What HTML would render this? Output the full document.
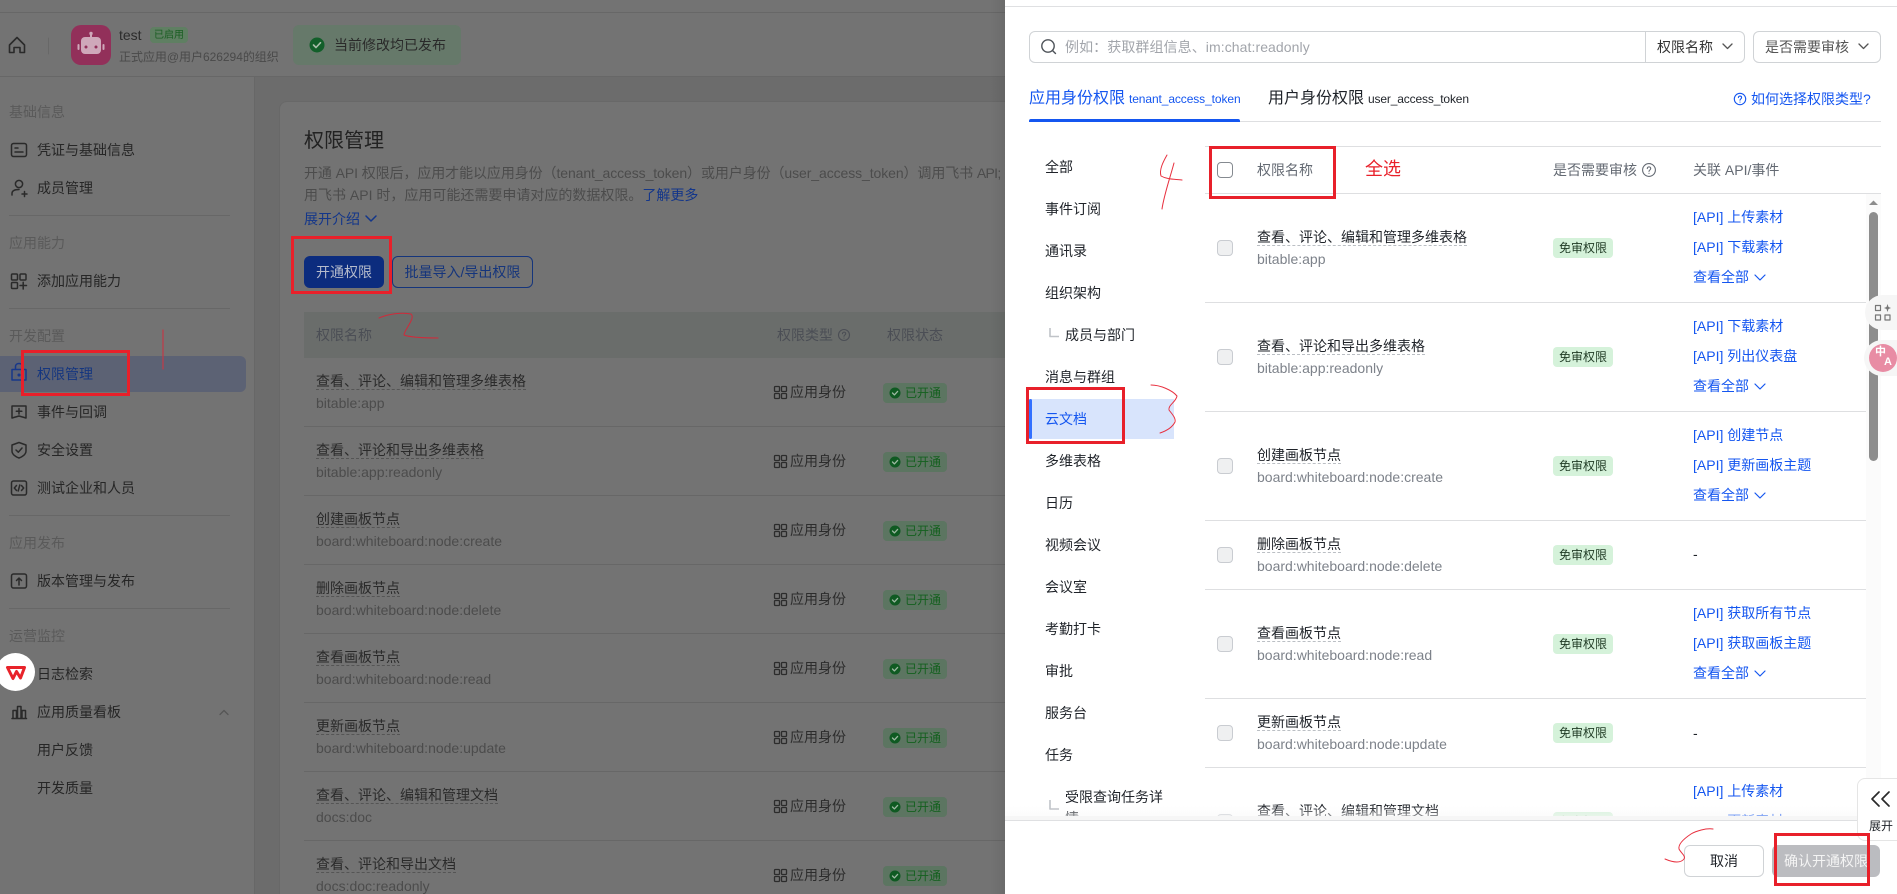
<!DOCTYPE html>
<html lang="zh-CN"><head><meta charset="utf-8"><title>权限管理</title>
<style>
html,body{margin:0;padding:0;width:1897px;height:894px;overflow:hidden;background:#737373}
body{position:relative;font-family:"Liberation Sans","Noto Sans CJK SC",sans-serif;font-size:14px;color:#262626}
.a,.b,.l,.ti,.su,.ty,.st,.c,.rt,.rs,.ap,.tg,.vm{position:absolute;white-space:nowrap;line-height:20px}
.b{background:#000;line-height:0}
.l{left:9px;color:#5a5a5a}
.b{position:absolute}
.ti{left:316px;line-height:16px;height:16px;border-bottom:1px dashed #555;color:#2a2a2a}
.su{left:316px;color:#4c4c4c}
.ty{left:790px;color:#2c2c2c}
.st{left:883px;width:64px;height:20px;background:#5c7561;border-radius:4px;color:#14601f;font-size:12px;text-indent:22px}
.c{left:1045px;color:#1f2329}
.rt{left:1257px;line-height:16px;height:16px;border-bottom:1px dashed #bbbfc4;color:#1f2329}
.rs{left:1257px;color:#7d828a}
.ap{left:1693px;color:#1456f0}
.tg{left:1553px;width:60px;height:20px;background:#d5f2da;border-radius:4px;color:#1f3a24;font-size:12px;text-align:center}
.ck{position:absolute;left:1217px;width:14px;height:14px;background:#eff0f1;border:1px solid #c9ccd1;border-radius:4px}
.ln{position:absolute;height:1px}
.rb{position:absolute;border:3px solid #e8202a;box-sizing:border-box}
svg{position:absolute;left:0;top:0;overflow:visible}
</style></head><body>

<!-- dimmed page background -->
<div class="ln" style="left:0;top:12px;width:1005px;background:#676767"></div>
<div class="ln" style="left:0;top:76px;width:1005px;background:#676767"></div>
<div class="ln" style="left:254px;top:77px;height:817px;width:1px;background:#676767"></div>
<div style="position:absolute;left:255px;top:77px;width:750px;height:817px;background:#6c6c6c"></div>
<div style="position:absolute;left:279px;top:101px;width:740px;height:810px;background:#737373;border:1px solid #686868;border-radius:8px;box-sizing:border-box"></div>

<!-- header -->
<div style="position:absolute;left:71px;top:25px;width:40px;height:40px;border-radius:10px;background:#92305a"></div>
<div style="position:absolute;left:150px;top:27px;width:38px;height:16px;border-radius:4px;background:#5f7f62"></div>
<div class="a" style="left:119px;top:25px;color:#2c2c2c;font-size:14px">test</div>
<div class="a" style="left:154px;top:26px;color:#1a5e22;font-size:10px">已启用</div>
<div class="a" style="left:119px;top:47px;color:#4a4a4a;font-size:12px;letter-spacing:-.03px">正式应用@用户626294的组织</div>
<div style="position:absolute;left:293px;top:25px;width:168px;height:40px;border-radius:6px;background:#66796a"></div>
<div class="a" style="left:334px;top:35px;color:#2a2a2a">当前修改均已发布</div>

<!-- sidebar -->
<div class="ln" style="left:9px;top:215px;width:221px;background:#676767"></div>
<div class="ln" style="left:9px;top:308px;width:221px;background:#676767"></div>
<div class="ln" style="left:9px;top:515px;width:221px;background:#676767"></div>
<div class="ln" style="left:9px;top:608px;width:221px;background:#676767"></div>
<div style="position:absolute;left:0;top:356px;width:246px;height:36px;background:#5c6274;border-radius:0 6px 6px 0"></div>
<div class="l" style="top:102px">基础信息</div>
<div class="a" style="left:37px;top:140px">凭证与基础信息</div>
<div class="a" style="left:37px;top:178px">成员管理</div>
<div class="l" style="top:233px">应用能力</div>
<div class="a" style="left:37px;top:271px">添加应用能力</div>
<div class="l" style="top:326px">开发配置</div>
<div class="a" style="left:37px;top:364px;color:#15367f">权限管理</div>
<div class="a" style="left:37px;top:402px">事件与回调</div>
<div class="a" style="left:37px;top:440px">安全设置</div>
<div class="a" style="left:37px;top:478px">测试企业和人员</div>
<div class="l" style="top:533px">应用发布</div>
<div class="a" style="left:37px;top:571px">版本管理与发布</div>
<div class="l" style="top:626px">运营监控</div>
<div class="a" style="left:37px;top:664px">日志检索</div>
<div class="a" style="left:37px;top:702px">应用质量看板</div>
<div class="a" style="left:37px;top:740px">用户反馈</div>
<div class="a" style="left:37px;top:778px">开发质量</div>

<!-- main card -->
<div class="a" style="left:304px;top:131px;font-size:20px;color:#222">权限管理</div>
<div class="a" style="left:304px;top:163px;color:#4c4c4c;letter-spacing:-.09px">开通 API 权限后，应用才能以应用身份（tenant_access_token）或用户身份（user_access_token）调用飞书 <span style="letter-spacing:-.7px">API;</span></div>
<div class="a" style="left:304px;top:185px;color:#4c4c4c">用飞书 API 时，应用可能还需要申请对应的数据权限。<span style="color:#13368a">了解更多</span></div>
<div class="a" style="left:304px;top:209px;color:#13368a">展开介绍</div>
<div style="position:absolute;left:304px;top:256px;width:80px;height:32px;background:#0c2c7e;border-radius:6px;color:#b5bbcc;line-height:32px;text-align:center">开通权限</div>
<div style="position:absolute;left:392px;top:256px;width:141px;height:32px;box-sizing:border-box;border:1px solid #15357c;border-radius:6px;color:#15357c;line-height:30px;text-align:center">批量导入/导出权限</div>

<div style="position:absolute;left:304px;top:312px;width:701px;height:46px;background:#6a6d6b"></div>
<div class="a" style="left:316px;top:325px;color:#4b4e55">权限名称</div>
<div class="a" style="left:777px;top:325px;color:#4b4e55">权限类型</div>
<div class="a" style="left:887px;top:325px;color:#4b4e55">权限状态</div>

<div class="ln" style="left:304px;top:426px;width:701px;background:#676767"></div>
<div class="ln" style="left:304px;top:495px;width:701px;background:#676767"></div>
<div class="ln" style="left:304px;top:564px;width:701px;background:#676767"></div>
<div class="ln" style="left:304px;top:633px;width:701px;background:#676767"></div>
<div class="ln" style="left:304px;top:702px;width:701px;background:#676767"></div>
<div class="ln" style="left:304px;top:771px;width:701px;background:#676767"></div>
<div class="ln" style="left:304px;top:840px;width:701px;background:#676767"></div>

<div class="ti" style="top:373px">查看、评论、编辑和管理多维表格</div><div class="su" style="top:393px">bitable:app</div>
<div class="ti" style="top:442px">查看、评论和导出多维表格</div><div class="su" style="top:462px">bitable:app:readonly</div>
<div class="ti" style="top:511px">创建画板节点</div><div class="su" style="top:531px">board:whiteboard:node:create</div>
<div class="ti" style="top:580px">删除画板节点</div><div class="su" style="top:600px">board:whiteboard:node:delete</div>
<div class="ti" style="top:649px">查看画板节点</div><div class="su" style="top:669px">board:whiteboard:node:read</div>
<div class="ti" style="top:718px">更新画板节点</div><div class="su" style="top:738px">board:whiteboard:node:update</div>
<div class="ti" style="top:787px">查看、评论、编辑和管理文档</div><div class="su" style="top:807px">docs:doc</div>
<div class="ti" style="top:856px">查看、评论和导出文档</div><div class="su" style="top:876px">docs:doc:readonly</div>

<div class="ty" style="top:382px">应用身份</div><div class="st" style="top:383px">已开通</div>
<div class="ty" style="top:451px">应用身份</div><div class="st" style="top:452px">已开通</div>
<div class="ty" style="top:520px">应用身份</div><div class="st" style="top:521px">已开通</div>
<div class="ty" style="top:589px">应用身份</div><div class="st" style="top:590px">已开通</div>
<div class="ty" style="top:658px">应用身份</div><div class="st" style="top:659px">已开通</div>
<div class="ty" style="top:727px">应用身份</div><div class="st" style="top:728px">已开通</div>
<div class="ty" style="top:796px">应用身份</div><div class="st" style="top:797px">已开通</div>
<div class="ty" style="top:865px">应用身份</div><div class="st" style="top:866px">已开通</div>

<div style="position:absolute;left:990px;top:0;width:15px;height:894px;background:linear-gradient(90deg,rgba(0,0,0,0),rgba(0,0,0,.07))"></div>

<!-- left-side icons -->
<svg width="1005" height="894" fill="none" stroke="#2a2a2a" stroke-width="1.5" stroke-linecap="round" stroke-linejoin="round">
<defs>
<g id="idn"><rect x="0" y="0" width="5" height="5" rx="1"/><rect x="7" y="0" width="5" height="5" rx="1"/><rect x="0" y="7" width="5" height="5" rx="1"/><rect x="7" y="7" width="5" height="5" rx="1"/></g>
<g id="ok"><circle cx="0" cy="0" r="5.5" fill="#0f5a22" stroke="none"/><path d="M-2.5 0 L-.6 1.9 L2.6 -1.6" stroke="#9db8a2" stroke-width="1.3"/></g>
</defs>
<path d="M9.5 45 L17 37.5 L24.5 45 V52.5 H20 V47.5 H14 V52.5 H9.5 Z" stroke-width="1.6"/>
<path d="M48.5 38 V54" stroke="#686868" stroke-width="1"/>
<!-- robot -->
<path d="M91 33 V37" stroke="#cfa8ba" stroke-width="2"/><circle cx="91" cy="33.5" r="1.7" fill="#cfa8ba" stroke="none"/>
<rect x="81" y="37" width="20" height="17" rx="4" fill="#cfa8ba" stroke="none"/>
<circle cx="86" cy="47" r="1.5" fill="#92305a" stroke="none"/><circle cx="96" cy="47" r="1.5" fill="#92305a" stroke="none"/>
<rect x="77.5" y="44" width="2" height="6" rx="1" fill="#cfa8ba" stroke="none"/><rect x="102.5" y="44" width="2" height="6" rx="1" fill="#cfa8ba" stroke="none"/>
<!-- banner check -->
<circle cx="317" cy="45" r="7.5" fill="#125f2a" stroke="none"/><path d="M313.5 45 L316 47.5 L320.5 42.7" stroke="#a9bdaa" stroke-width="1.6"/>
<!-- sidebar icons -->
<rect x="11.5" y="143.5" width="15" height="13" rx="2"/><path d="M15 148 H18 M15 152 H23"/>
<circle cx="19" cy="184" r="3.6"/><path d="M12 195 V193.5 C12 190.5 15 189.5 19 189.5 M22 194 H27 M24.5 191.5 V196.5"/>
<rect x="11.5" y="274" width="6" height="6" rx="1"/><rect x="20" y="274" width="6" height="6" rx="1"/><rect x="11.5" y="282.5" width="6" height="6" rx="1"/><path d="M20 285.5 H26.5 M23.2 282.2 V289"/>
<g stroke="#17378a"><path d="M12 369.5 H26 V380 H12 Z M15.5 369 V366.5 C15.5 362.5 22.5 362.5 22.5 366.5 V369"/><circle cx="19" cy="375" r=".8" fill="#17378a"/></g>
<path d="M12 406 H26 V418 L19 416 L12 418 Z M19 408.5 V414 M16.3 411.2 H21.8"/>
<path d="M19 442.5 L26 445 V451 C26 454.5 22 457 19 458 C16 457 12 454.5 12 451 V445 Z M16 450 L18.3 452.2 L22 448"/>
<rect x="11.5" y="481" width="15" height="14" rx="2"/><path d="M16.5 485.5 L14.3 488 L16.5 490.5 M21.5 485.5 L23.7 488 L21.5 490.5 M19.8 485 L18.2 491"/>
<rect x="11.5" y="574" width="15" height="14" rx="2"/><path d="M19 585 V578 M16.5 580.5 L19 578 L21.5 580.5"/>
<path d="M12 718.5 H26.5 M13 718 V710.5 H16.5 V718 M17.5 718 V706.5 H21 V718 M22 718 V710.5 H25.5 V718"/>
<path d="M220 714.5 L224 710.5 L228 714.5" stroke="#565656" stroke-width="1.3"/>
<path d="M366 216 L371 221 L376 216" stroke="#13368a" stroke-width="1.5"/>
<circle cx="844" cy="335" r="5.5" stroke="#4b4e55" stroke-width="1.1"/><path d="M842.5 333.7 C842.5 331.5 845.7 331.7 845.7 333.7 C845.7 335 844 335 844 336.3 M844 338 V338.1" stroke="#4b4e55" stroke-width="1.1"/>
<g stroke="#2c2c2c" stroke-width="1.3">
<use href="#idn" x="774.5" y="386.5"/><use href="#idn" x="774.5" y="455.5"/><use href="#idn" x="774.5" y="524.5"/><use href="#idn" x="774.5" y="593.5"/><use href="#idn" x="774.5" y="662.5"/><use href="#idn" x="774.5" y="731.5"/><use href="#idn" x="774.5" y="800.5"/><use href="#idn" x="774.5" y="869.5"/>
</g>
<use href="#ok" x="895" y="393"/><use href="#ok" x="895" y="462"/><use href="#ok" x="895" y="531"/><use href="#ok" x="895" y="600"/><use href="#ok" x="895" y="669"/><use href="#ok" x="895" y="738"/><use href="#ok" x="895" y="807"/><use href="#ok" x="895" y="876"/>
</svg>

<!-- WPS floating -->
<div style="position:absolute;left:-4px;top:653px;width:39px;height:38px;border-radius:50%;background:#fff"></div>
<svg width="40" height="700" fill="none"><path d="M7.5 667.5 H24.5 L20.5 678 L16.5 671.5 L13 678.5 Z" stroke="#e8232a" stroke-width="3" stroke-linejoin="round"/></svg>

<!-- drawer -->
<div style="position:absolute;left:1005px;top:0;width:892px;height:894px;background:#fff"></div>
<div class="ln" style="left:1005px;top:6px;width:892px;background:#dfe0e2"></div>

<div style="position:absolute;left:1029px;top:31px;width:716px;height:32px;box-sizing:border-box;border:1px solid #d0d3d6;border-radius:6px"></div>
<div class="ln" style="left:1645px;top:32px;width:1px;height:30px;background:#d0d3d6"></div>
<div class="a" style="left:1065px;top:37px;color:#a2a5ab;letter-spacing:.08px">例如：获取群组信息、im:chat:readonly</div>
<div class="a" style="left:1657px;top:37px;color:#333">权限名称</div>
<div style="position:absolute;left:1753px;top:31px;width:128px;height:32px;box-sizing:border-box;border:1px solid #d0d3d6;border-radius:6px"></div>
<div class="a" style="left:1765px;top:37px;color:#555">是否需要审核</div>

<div class="ln" style="left:1029px;top:121px;width:852px;background:#dedfe1"></div>
<div style="position:absolute;left:1029px;top:119px;width:211px;height:3px;background:#1456f0;border-radius:2px 2px 0 0"></div>
<div class="a" style="left:1029px;top:89px;font-size:16px;color:#1456f0">应用身份权限</div>
<div class="a" style="left:1129px;top:89px;font-size:12px;color:#1456f0;letter-spacing:-.1px">tenant_access_token</div>
<div class="a" style="left:1268px;top:89px;font-size:16px;color:#1f2329">用户身份权限</div>
<div class="a" style="left:1368px;top:89px;font-size:12px;color:#1f2329;letter-spacing:-.15px">user_access_token</div>
<div class="a" style="left:1751px;top:89px;color:#1456f0">如何选择权限类型?</div>

<!-- categories -->
<div style="position:absolute;left:1029px;top:399px;width:145px;height:40px;background:#d8e4fc"></div>
<div style="position:absolute;left:1029px;top:399px;width:3px;height:40px;background:#3370ff;border-radius:2px"></div>
<div class="c" style="top:157px">全部</div>
<div class="c" style="top:199px">事件订阅</div>
<div class="c" style="top:241px">通讯录</div>
<div class="c" style="top:283px">组织架构</div>
<div class="c" style="left:1065px;top:325px">成员与部门</div>
<div class="c" style="top:367px">消息与群组</div>
<div class="c" style="top:409px;color:#1456f0">云文档</div>
<div class="c" style="top:451px">多维表格</div>
<div class="c" style="top:493px">日历</div>
<div class="c" style="top:535px">视频会议</div>
<div class="c" style="top:577px">会议室</div>
<div class="c" style="top:619px">考勤打卡</div>
<div class="c" style="top:661px">审批</div>
<div class="c" style="top:703px">服务台</div>
<div class="c" style="top:745px">任务</div>
<div class="c" style="left:1065px;top:787px">受限查询任务详</div>
<div class="c" style="left:1065px;top:808px">情</div>

<!-- right table -->
<div class="ln" style="left:1205px;top:146px;width:676px;background:#dedfe1"></div>
<div class="ln" style="left:1205px;top:193px;width:676px;background:#dedfe1"></div>
<div class="ln" style="left:1205px;top:302px;width:661px;background:#dedfe1"></div>
<div class="ln" style="left:1205px;top:411px;width:661px;background:#dedfe1"></div>
<div class="ln" style="left:1205px;top:520px;width:661px;background:#dedfe1"></div>
<div class="ln" style="left:1205px;top:589px;width:661px;background:#dedfe1"></div>
<div class="ln" style="left:1205px;top:698px;width:661px;background:#dedfe1"></div>
<div class="ln" style="left:1205px;top:767px;width:661px;background:#dedfe1"></div>

<div class="ck" style="top:162px;background:#fff;border-color:#858a90"></div>
<div class="a" style="left:1257px;top:160px;color:#646a73">权限名称</div>
<div class="a" style="left:1365px;top:159px;color:#e8202a;font-size:18px">全选</div>
<div class="a" style="left:1553px;top:160px;color:#646a73">是否需要审核</div>
<div class="a" style="left:1693px;top:160px;color:#646a73">关联 API/事件</div>

<div class="ck" style="top:240px"></div><div class="rt" style="top:229px">查看、评论、编辑和管理多维表格</div><div class="rs" style="top:249px">bitable:app</div><div class="tg" style="top:238px">免审权限</div>
<div class="ap" style="top:207px">[API] 上传素材</div><div class="ap" style="top:237px">[API] 下载素材</div><div class="ap" style="top:267px">查看全部</div>

<div class="ck" style="top:349px"></div><div class="rt" style="top:338px">查看、评论和导出多维表格</div><div class="rs" style="top:358px">bitable:app:readonly</div><div class="tg" style="top:347px">免审权限</div>
<div class="ap" style="top:316px">[API] 下载素材</div><div class="ap" style="top:346px">[API] 列出仪表盘</div><div class="ap" style="top:376px">查看全部</div>

<div class="ck" style="top:458px"></div><div class="rt" style="top:447px">创建画板节点</div><div class="rs" style="top:467px">board:whiteboard:node:create</div><div class="tg" style="top:456px">免审权限</div>
<div class="ap" style="top:425px">[API] 创建节点</div><div class="ap" style="top:455px">[API] 更新画板主题</div><div class="ap" style="top:485px">查看全部</div>

<div class="ck" style="top:547px"></div><div class="rt" style="top:536px">删除画板节点</div><div class="rs" style="top:556px">board:whiteboard:node:delete</div><div class="tg" style="top:545px">免审权限</div>
<div class="a" style="left:1693px;top:544px;color:#1f2329">-</div>

<div class="ck" style="top:636px"></div><div class="rt" style="top:625px">查看画板节点</div><div class="rs" style="top:645px">board:whiteboard:node:read</div><div class="tg" style="top:634px">免审权限</div>
<div class="ap" style="top:603px">[API] 获取所有节点</div><div class="ap" style="top:633px">[API] 获取画板主题</div><div class="ap" style="top:663px">查看全部</div>

<div class="ck" style="top:725px"></div><div class="rt" style="top:714px">更新画板节点</div><div class="rs" style="top:734px">board:whiteboard:node:update</div><div class="tg" style="top:723px">免审权限</div>
<div class="a" style="left:1693px;top:723px;color:#1f2329">-</div>

<div class="ck" style="top:814px"></div><div class="rt" style="top:803px">查看、评论、编辑和管理文档</div><div class="tg" style="top:812px">免审权限</div>
<div class="ap" style="top:781px">[API] 上传素材</div><div class="ap" style="top:811px">[API] 更新素材</div>

<!-- scrollbar -->
<div style="position:absolute;left:1866px;top:194px;width:15px;height:626px;background:#fbfbfb"></div>
<div style="position:absolute;left:1869px;top:212px;width:9px;height:249px;background:#8d8d8d;border-radius:4.5px"></div>

<!-- footer -->
<div style="position:absolute;left:1005px;top:806px;width:892px;height:10px;background:linear-gradient(rgba(250,250,250,0),rgba(248,248,248,.5))"></div>
<div style="position:absolute;left:1005px;top:816px;width:892px;height:4px;background:#f6f6f6"></div>
<div style="position:absolute;left:1005px;top:820px;width:892px;height:74px;background:#fff;border-top:1px solid #dfe0e2;box-sizing:border-box"></div>
<div style="position:absolute;left:1684px;top:845px;width:80px;height:32px;box-sizing:border-box;border:1px solid #d0d3d6;border-radius:6px;line-height:30px;text-align:center;color:#1f2329">取消</div>
<div style="position:absolute;left:1772px;top:845px;width:108px;height:32px;background:#bbbcc0;border-radius:6px;line-height:32px;text-align:center;color:#f4f4f4">确认开通权限</div>

<!-- floating widgets -->
<div style="position:absolute;left:1865px;top:295px;width:50px;height:35px;border-radius:18px;background:#f6f6f6"></div>
<div style="position:absolute;left:1864px;top:340px;width:50px;height:36px;border-radius:18px;background:#f6f6f6"></div>
<div style="position:absolute;left:1869px;top:344px;width:28px;height:28px;border-radius:50%;background:#e88ca4"></div>
<div class="a" style="left:1875px;top:345px;color:#fff;font-size:11px;line-height:14px;font-weight:bold">中</div>
<div class="a" style="left:1884px;top:355px;color:#fff;font-size:11px;line-height:14px;font-weight:bold">A</div>
<div style="position:absolute;left:1857px;top:778px;width:50px;height:63px;box-sizing:border-box;background:#fff;border:1px solid #e5e5e5;border-radius:8px"></div>
<div class="a" style="left:1869px;top:816px;font-size:12px;color:#1f2329">展开</div>

<!-- right-side icons -->
<svg width="1897" height="894" fill="none" stroke-linecap="round" stroke-linejoin="round">
<circle cx="1048" cy="46" r="6.2" stroke="#4e5359" stroke-width="1.4"/><path d="M1052.6 50.6 L1055.5 53.5" stroke="#4e5359" stroke-width="1.4"/>
<path d="M1723 44 L1727.5 48.5 L1732 44 M1859 44 L1863.5 48.5 L1868 44" stroke="#555" stroke-width="1.3"/>
<circle cx="1740" cy="99" r="5.7" stroke="#1456f0" stroke-width="1.1"/><path d="M1738.4 97.6 C1738.4 95.5 1741.6 95.7 1741.6 97.6 C1741.6 98.9 1740 98.9 1740 100.2 M1740 102 V102.1" stroke="#1456f0" stroke-width="1.1"/>
<circle cx="1649" cy="170" r="6.4" stroke="#646a73" stroke-width="1.1"/><path d="M1647.3 168.6 C1647.3 166.2 1650.7 166.4 1650.7 168.6 C1650.7 170 1649 170 1649 171.4 M1649 173.3 V173.4" stroke="#646a73" stroke-width="1.1"/>
<g stroke="#c0c3c8" stroke-width="1.6" stroke-linecap="butt"><path d="M1050 328 V336.5 H1059 M1050 800 V809 H1059"/></g>
<g stroke="#1456f0" stroke-width="1.2"><path d="M1755 275 L1760 280 L1765 275 M1755 384 L1760 389 L1765 384 M1755 493 L1760 498 L1765 493 M1755 671 L1760 676 L1765 671"/></g>
<path d="M1873.5 200.5 L1878 205 H1869 Z" fill="#8d8d8d"/>
<g stroke="#777" stroke-width="1.2"><rect x="1875.5" y="305.5" width="5" height="5"/><rect x="1875.5" y="315" width="5" height="5"/><rect x="1885" y="315" width="5" height="5"/></g>
<path d="M1887.5 304 L1888.5 307 L1891 308 L1888.5 309 L1887.5 312 L1886.5 309 L1884 308 L1886.5 307 Z" fill="#777"/>
<path d="M1879 792 L1872 799 L1879 806 M1889 792 L1882 799 L1889 806" stroke="#2a2a2a" stroke-width="1.7"/>

<!-- hand annotations -->
<g stroke="#e8303f" stroke-width="1">
<path d="M163 330 V369" stroke="#c23a48" stroke-width="1.2"/>
<path d="M379 318 C388 314 402 312 411 314 C416 318 404 330 404 335 C412 338 428 338 438 338" stroke="#d02a3a"/>
<path d="M1167 155 C1163 162 1159 170 1161 176 C1168 180 1176 179 1182 180 M1174 163 C1170 178 1164 195 1162 209"/>
<path d="M1151 385 C1160 385 1172 390 1177 396 C1176 402 1168 405 1169 410 C1172 414 1176 418 1175 422 C1172 428 1166 431 1160 433"/>
<path d="M1713 829 C1706 828 1696 831 1691 834 C1685 838 1678 844 1679 849 C1681 853 1686 856 1684 859 C1680 864 1672 862 1665 859"/>
</g>
</svg>

<div class="rb" style="left:291px;top:236px;width:101px;height:58px"></div>
<div class="rb" style="left:21px;top:350px;width:109px;height:46px"></div>
<div class="rb" style="left:1209px;top:146px;width:127px;height:53px"></div>
<div class="rb" style="left:1026px;top:387px;width:99px;height:57px"></div>
<div class="rb" style="left:1774px;top:833px;width:96px;height:53px"></div>

</body></html>
